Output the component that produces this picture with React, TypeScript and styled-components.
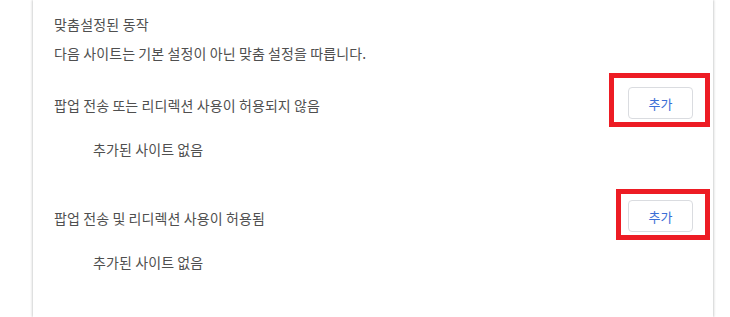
import * as React from 'react';
import styled, { createGlobalStyle } from 'styled-components';

const GlobalStyle = createGlobalStyle`
	html, body {
		margin: 0;
		padding: 0;
		background: #ffffff;
		font-family: "Noto Sans CJK KR", "Noto Sans", "Liberation Sans", sans-serif;
		font-size: 14px;
		color: #4f4f4f;
	}
`;

const Page = styled.div`
	width: 730px;
	height: 317px;
	overflow: hidden;
	padding-left: 33px;
	box-sizing: border-box;
`;

const Card = styled.section`
	width: 680px;
	min-height: 317px;
	box-sizing: border-box;
	padding: 14px 20px 0 21px;
	background: #ffffff;
	box-shadow: -1px 0 2px rgba(60, 64, 67, 0.18), 1px 0 2px rgba(60, 64, 67, 0.18), 0 0 3px rgba(60, 64, 67, 0.08);
`;

const Title = styled.h2`
	margin: 0;
	font-size: 14px;
	font-weight: 400;
	line-height: 20px;
	letter-spacing: 0.2px;
	color: #4f4f4f;
`;

const Description = styled.p`
	margin: 9px 0 0;
	line-height: 20px;
	letter-spacing: 0.1px;
`;

const Section = styled.div<{ $gap: number }>`
	margin-top: ${p => p.$gap}px;
`;

const Row = styled.div`
	display: flex;
	align-items: center;
	justify-content: space-between;
	height: 48px;
`;

const Label = styled.span<{ $shift: number }>`
	line-height: 20px;
	letter-spacing: 0.1px;
	padding-top: ${p => p.$shift}px;
`;

const ButtonSlot = styled.div`
	position: relative;
	display: flex;
`;

const AddButton = styled.button`
	width: 65px;
	height: 32px;
	box-sizing: border-box;
	border: 1px solid #dadce0;
	border-radius: 4px;
	background: #ffffff;
	color: #3b6fd6;
	font-family: inherit;
	font-size: 13px;
	cursor: pointer;
`;

const Highlight = styled.div<{ $top: number; $right: number; $bottom: number; $left: number }>`
	position: absolute;
	top: -${p => p.$top}px;
	right: -${p => p.$right}px;
	bottom: -${p => p.$bottom}px;
	left: -${p => p.$left}px;
	border: 5px solid #ed1c24;
	pointer-events: none;
`;

const Empty = styled.div`
	height: 50px;
	box-sizing: border-box;
	display: flex;
	align-items: center;
	padding: 0 0 6px 39px;
	line-height: 20px;
	letter-spacing: 0.1px;
`;

interface SiteListProps {
	label: string;
	gap: number;
	shift: number;
	box: { top: number; right: number; bottom: number; left: number };
}

const SiteList = ({ label, gap, shift, box }: SiteListProps) => (
	<Section $gap={gap}>
		<Row>
			<Label $shift={shift}>{label}</Label>
			<ButtonSlot>
				<AddButton>추가</AddButton>
				<Highlight $top={box.top} $right={box.right} $bottom={box.bottom} $left={box.left} />
			</ButtonSlot>
		</Row>
		<Empty>추가된 사이트 없음</Empty>
	</Section>
);

export default function App() {
	return (
		<Page>
			<GlobalStyle />
			<Card>
				<Title>맞춤설정된 동작</Title>
				<Description>다음 사이트는 기본 설정이 아닌 맞춤 설정을 따릅니다.</Description>
				<SiteList
					label="팝업 전송 또는 리디렉션 사용이 허용되지 않음"
					gap={16}
					shift={3}
					box={{ top: 14, right: 17, bottom: 8, left: 19 }}
				/>
				<SiteList
					label="팝업 전송 및 리디렉션 사용이 허용됨"
					gap={15}
					shift={4}
					box={{ top: 11, right: 17, bottom: 8, left: 12 }}
				/>
			</Card>
		</Page>
	);
}
